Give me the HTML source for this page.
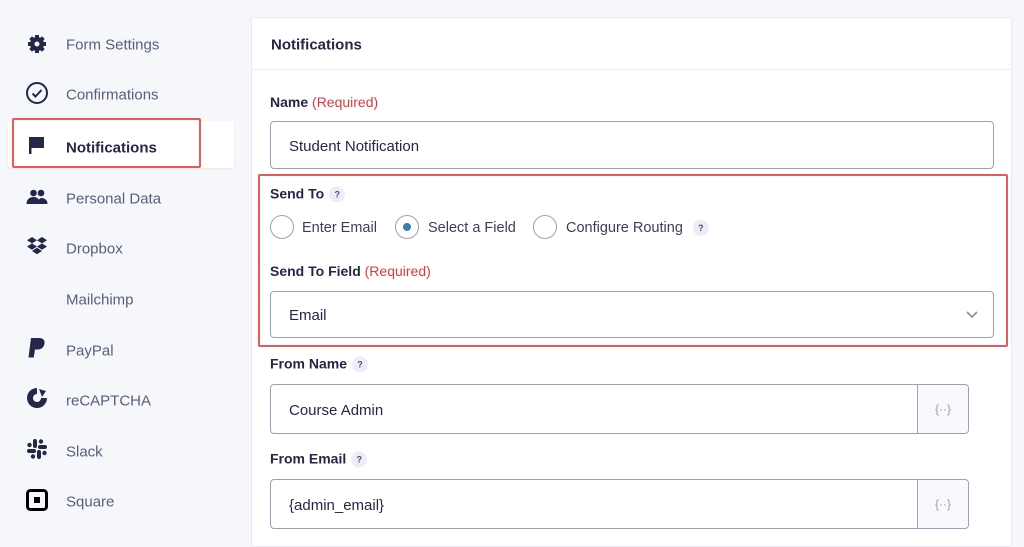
<!DOCTYPE html>
<html><head><style>
*{box-sizing:border-box;margin:0;padding:0}
body{width:1024px;height:537px;overflow:hidden;background:#f5f7fb;font-family:"Liberation Sans",sans-serif;position:relative;color:#242748}
.a{position:absolute}
.nav{position:absolute;left:66px;font-size:15px;color:#5b5e78;transform:translateY(-50%);margin-top:1px}
.ic{position:absolute;left:25px;width:24px;height:24px;transform:translateY(-50%)}
.lbl{position:absolute;left:270px;font-size:14px;font-weight:bold;color:#242748;transform:translateY(-50%);white-space:nowrap;margin-top:1px}
.req{color:#e0393e;font-weight:normal}
.q{display:inline-block;width:16px;height:16px;border-radius:50%;background:#ecedf8;color:#4a4d6b;font-size:9px;text-align:center;line-height:16px;vertical-align:middle;margin-left:5px;font-weight:bold}
.inp{position:absolute;left:270px;border:1px solid #9b9fc0;border-radius:4px;background:#fff;font-size:15px;color:#242748;padding-left:18px;display:flex;align-items:center;padding-top:2px}
.add{position:absolute;right:0;top:0;bottom:0;width:51px;border-left:1px solid #9b9fc0;background:#f9f9fd;border-radius:0 4px 4px 0;color:#9a9cac;font-size:12px;display:flex;align-items:center;justify-content:center}
.r{position:absolute;width:24px;height:24px;border-radius:50%;border:1px solid #9b9fc0;background:#fff;top:215px}
.rt{position:absolute;top:228px;font-size:14.5px;color:#3d405c;transform:translateY(-50%)}
</style></head><body>
<div class="a" style="left:8px;top:121px;width:226px;height:47px;background:#fff;border-radius:3px;box-shadow:0 1px 2px rgba(0,0,0,.06)"></div>
<div class="a" style="left:12px;top:118px;width:189px;height:50px;border:2px solid #e9585a;border-radius:2px"></div>

<svg class="ic" style="top:44px" viewBox="0 0 24 24"><path fill="#242748" d="M12 5a7 7 0 1 0 0 14a7 7 0 1 0 0-14zm0 4.5a2.5 2.5 0 1 1 0 5a2.5 2.5 0 1 1 0-5z" fill-rule="evenodd"/><g fill="#242748"><rect x="10" y="3" width="4" height="4"/><rect x="10" y="17" width="4" height="4"/><rect x="3" y="10" width="4" height="4"/><rect x="17" y="10" width="4" height="4"/><rect x="10" y="3" width="4" height="4" transform="rotate(45 12 12)"/><rect x="10" y="17" width="4" height="4" transform="rotate(45 12 12)"/><rect x="3" y="10" width="4" height="4" transform="rotate(45 12 12)"/><rect x="17" y="10" width="4" height="4" transform="rotate(45 12 12)"/></g></svg>
<div class="nav" style="top:44px">Form Settings</div>
<svg class="ic" style="top:93px" viewBox="0 0 24 24"><circle cx="12" cy="12" r="10" fill="none" stroke="#242748" stroke-width="2"/><path d="M7.5 12.5l3 3 6-6.5" fill="none" stroke="#242748" stroke-width="2"/></svg>
<div class="nav" style="top:94px">Confirmations</div>
<svg class="ic" style="top:145px" viewBox="0 0 24 24"><path fill="#242748" d="M4 4h2.5v17H4zM6 4h13v11H6z"/></svg>
<div class="nav" style="top:147px;color:#242748;font-weight:bold">Notifications</div>
<svg class="ic" style="top:197px" viewBox="0 0 24 24"><g fill="#242748"><circle cx="8.5" cy="8" r="3.3"/><circle cx="16" cy="8" r="3.3"/><path d="M1.5 19c0-4.5 3-7 7-7s6.5 2.5 6.5 7z"/><path d="M13 19c0-3 1-6 3.5-6s6 1.5 6 6z"/></g></svg>
<div class="nav" style="top:198px">Personal Data</div>
<svg class="ic" style="top:246px" viewBox="0 0 24 24"><g fill="#242748"><path d="M7 3l5 3.2-5 3.2-5-3.2zM17 3l5 3.2-5 3.2-5-3.2zM2 12.6l5-3.2 5 3.2-5 3.2zM12 12.6l5-3.2 5 3.2-5 3.2zM7 17l5-3.2 5 3.2-5 3.2z"/></g></svg>
<div class="nav" style="top:248px">Dropbox</div>
<div class="nav" style="top:299px">Mailchimp</div>
<svg class="ic" style="top:348px" viewBox="0 0 24 24"><path fill="#242748" d="M6 2h8c4 0 6 2 5.5 5.5C19 11 16.5 13.5 13 13.5h-3l-1.3 8H3.5z"/></svg>
<div class="nav" style="top:350px">PayPal</div>
<svg class="ic" style="top:398px" viewBox="0 0 24 24"><path fill="#242748" d="M12 2a10 10 0 1 0 10 10h-6a4 4 0 1 1-4-4V2zm2 1l7 2-4 6z"/></svg>
<div class="nav" style="top:400px">reCAPTCHA</div>
<svg class="ic" style="top:449px" viewBox="0 0 24 24"><g fill="#242748"><rect x="8" y="2" width="4" height="9" rx="2"/><rect x="12" y="13" width="4" height="9" rx="2"/><rect x="2" y="12" width="9" height="4" rx="2"/><rect x="13" y="8" width="9" height="4" rx="2"/><circle cx="16" cy="4.5" r="2.2"/><circle cx="4.5" cy="8" r="2.2"/><circle cx="8" cy="19.5" r="2.2"/><circle cx="19.5" cy="16" r="2.2"/></g></svg>
<div class="nav" style="top:451px">Slack</div>
<svg class="ic" style="top:500px" viewBox="0 0 24 24"><rect x="2.5" y="2.5" width="19" height="19" rx="3" fill="none" stroke="#000" stroke-width="3"/><rect x="9" y="9" width="6" height="6" fill="#000"/></svg>
<div class="nav" style="top:501px">Square</div>

<div class="a" style="left:251px;top:17px;width:761px;height:530px;background:#fff;border:1px solid #e8eaf2;border-radius:3px"></div>
<div class="a" style="left:251px;top:69px;width:761px;height:1px;background:#eceef4"></div>
<div class="a" style="left:271px;top:45px;transform:translateY(-50%);font-size:15px;font-weight:bold">Notifications</div>

<div class="lbl" style="top:101px">Name <span class="req">(Required)</span></div>
<div class="inp" style="top:121px;width:724px;height:48px">Student Notification</div>

<div class="a" style="left:258px;top:174px;width:750px;height:173px;border:2px solid #e9585a;border-radius:2px"></div>
<div class="lbl" style="top:193px">Send To<span class="q">?</span></div>
<div class="r" style="left:270px"></div><div class="rt" style="left:302px">Enter Email</div>
<div class="r" style="left:395px"><div class="a" style="left:7px;top:7px;width:8px;height:8px;border-radius:50%;background:#3e7fa8"></div></div><div class="rt" style="left:428px">Select a Field</div>
<div class="r" style="left:533px"></div><div class="rt" style="left:566px">Configure Routing<span class="q" style="margin-left:10px">?</span></div>
<div class="lbl" style="top:270px">Send To Field <span class="req">(Required)</span></div>
<div class="inp" style="top:291px;width:724px;height:47px">Email
<svg class="a" style="right:15px;top:19px" width="12" height="8" viewBox="0 0 12 8"><path d="M1 1l5 5 5-5" fill="none" stroke="#8a8da6" stroke-width="1.6"/></svg></div>

<div class="lbl" style="top:363px">From Name<span class="q">?</span></div>
<div class="inp" style="top:384px;width:699px;height:50px">Course Admin<div class="add">{··}</div></div>
<div class="lbl" style="top:458px">From Email<span class="q">?</span></div>
<div class="inp" style="top:479px;width:699px;height:50px">{admin_email}<div class="add">{··}</div></div>
</body></html>
